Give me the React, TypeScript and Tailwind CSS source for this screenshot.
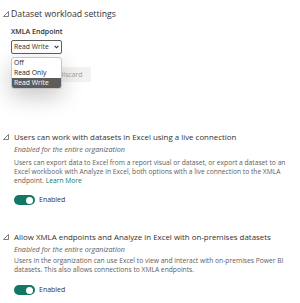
import { ReactNode } from "react";

const Tri = () => (
    <svg width="6" height="6" viewBox="0 0 6 6" className="shrink-0">
        <polygon points="5.5,0.5 5.5,5.5 0.5,5.5" fill="none" stroke="#605e5c" strokeWidth="0.8" />
    </svg>
);

const Toggle = () => (
    <div className="flex items-center gap-[4px]">
        <div className="w-[21px] h-[10px] rounded-full bg-[#117865] flex items-center justify-end pr-[2px]">
            <div className="w-[7px] h-[7px] rounded-full bg-white" />
        </div>
        <span className="text-[7px] leading-[10px] text-[#323130]">Enabled</span>
    </div>
);

const Setting = ({ title, children, className }: { title: string; children: ReactNode; className?: string }) => (
    <div className={className}>
        <div className="flex items-center">
            <div className="w-[14px] pl-[3px] flex items-center"><Tri /></div>
            <div className="text-[7.9px] leading-[12px] text-[#323130]">{title}</div>
        </div>
        <div className="pl-[14px]">
            <div className="mt-[1px] text-[7.2px] leading-[10px] italic text-[#605e5c]">Enabled for the entire organization</div>
            {children}
        </div>
    </div>
);

export default function App() {
    return (
        <div className="w-[300px] h-[303px] bg-white overflow-hidden relative font-['Open_Sans','Noto_Sans',sans-serif]">
            {/* Dataset workload settings */}
            <div className="pt-[8px]">
                <div className="flex items-center">
                    <div className="w-[11px] pl-[3px] flex items-center"><Tri /></div>
                    <div className="text-[8.7px] leading-[12px] text-[#323130]">Dataset workload settings</div>
                </div>
                <div className="pl-[11px]">
                    <div className="mt-[7px] text-[7px] leading-[10px] font-semibold text-[#323130]">XMLA Endpoint</div>
                    <div className="mt-[3px] w-[51px] h-[14px] border border-[#605e5c] rounded-[2px] flex items-center justify-between px-[2px]">
                        <span className="text-[6.8px] text-[#323130]">Read Write</span>
                        <svg width="5" height="4" viewBox="0 0 5 4">
                            <path d="M0.6 0.8 L2.5 2.8 L4.4 0.8" fill="none" stroke="#323130" strokeWidth="1.1" />
                        </svg>
                    </div>
                    <div className="mt-[13px] flex gap-[4px]">
                        <div className="w-[35px] h-[15px] rounded-[2px] bg-[#f3f2f1] text-[6.8px] leading-[15px] text-center text-[#a19f9d]">Apply</div>
                        <div className="w-[41px] h-[15px] rounded-[2px] bg-[#f3f2f1] text-[6.8px] leading-[15px] text-center text-[#a19f9d]">Discard</div>
                    </div>
                </div>
            </div>

            {/* open select list */}
            <div className="absolute left-[11px] top-[57px] w-[51px] bg-white border border-[#c8c6c4] rounded-[3px] overflow-hidden shadow-[0_8px_22px_rgba(0,0,0,0.22)] text-[6.8px] leading-[10px] text-[#201f1e]">
                <div className="px-[2px]">Off</div>
                <div className="px-[2px]">Read Only</div>
                <div className="px-[2px] bg-[#5c5c5c] text-white">Read Write</div>
            </div>

            <Setting title="Users can work with datasets in Excel using a live connection" className="mt-[49px]">
                <div className="mt-[4px] text-[6.7px] leading-[9px] text-[#605e5c] pr-[6px]">
                    Users can export data to Excel from a report visual or dataset, or export a dataset to an Excel workbook with Analyze in Excel, both options with a live connection to the XMLA endpoint.{"  "}
                    <span className="text-[#117865]">Learn More</span>
                </div>
                <div className="mt-[10px]"><Toggle /></div>
            </Setting>

            <Setting title="Allow XMLA endpoints and Analyze in Excel with on-premises datasets" className="mt-[26px]">
                <div className="mt-[2px] text-[6.7px] leading-[9px] text-[#605e5c] pr-[6px]">
                    Users in the organization can use Excel to view and interact with on-premises Power BI datasets. This also allows connections to XMLA endpoints.
                </div>
                <div className="mt-[11px]"><Toggle /></div>
            </Setting>
        </div>
    );
}
